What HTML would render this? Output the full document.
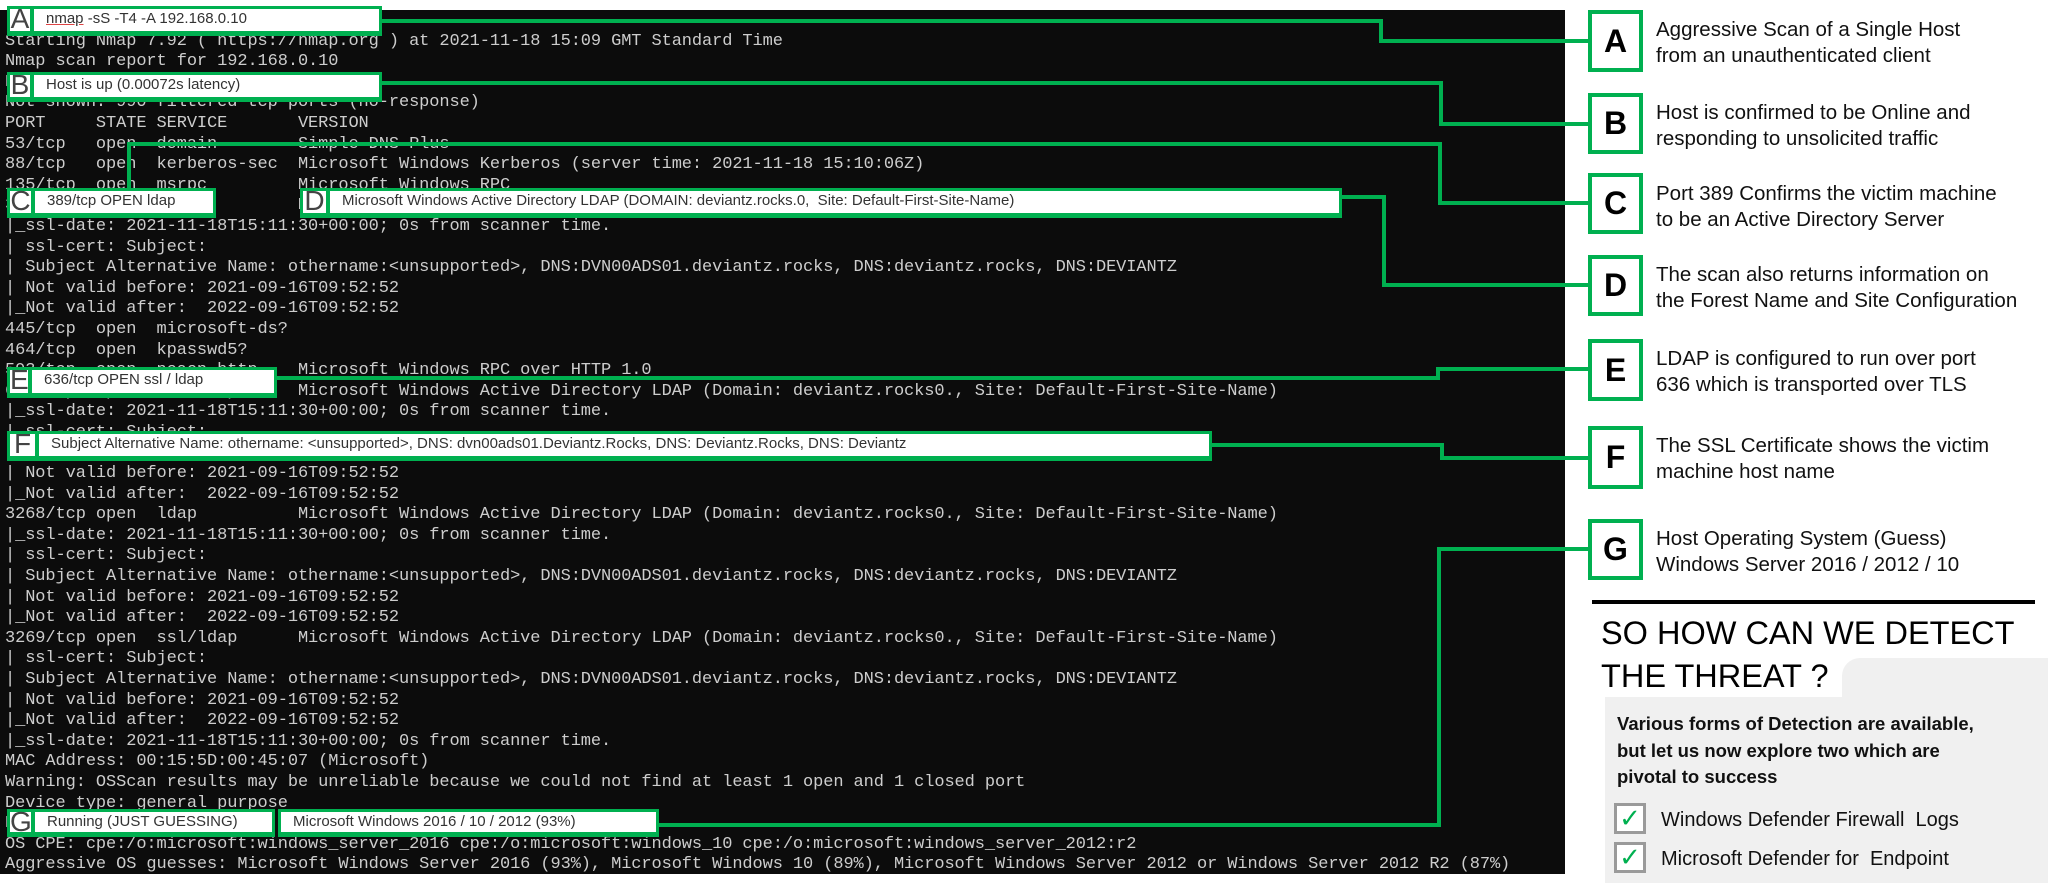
<!DOCTYPE html>
<html><head><meta charset="utf-8"><style>
*{margin:0;padding:0;box-sizing:border-box}
body{width:2048px;height:894px;background:#fff;position:relative;overflow:hidden;font-family:"Liberation Sans",sans-serif}
#term{position:absolute;left:0;top:10px;width:1565px;height:864px;background:#0c0c0c}
#txt{position:absolute;left:5px;top:11px;font-family:"Liberation Mono",monospace;font-size:17px;line-height:20.6px;color:#cdcdcd;white-space:pre;letter-spacing:-0.1px}
.g{position:absolute;background:#00b050}
.lb{position:absolute;background:#fff;border:3px solid #00b050;border-bottom-width:5px;color:#444;font-size:28px;line-height:20px;text-align:center;font-weight:300}
.tb{position:absolute;background:#fff;border:3px solid #00b050;border-bottom-width:5px;color:#333;font-size:15px;line-height:20px;padding-left:12px;white-space:nowrap}
.cb{position:absolute;left:1588px;width:55px;border:4px solid #00b050;background:#fff;font-weight:bold;font-size:32px;text-align:center;color:#000}
.ct{position:absolute;left:1656px;font-size:20.5px;line-height:26px;color:#111;white-space:nowrap}
.chk{position:absolute;left:1614px;width:32px;height:31px;border:3px solid #9a9a9a;background:#fff;color:#00b050;font-size:26px;line-height:24px;text-align:center}
</style></head><body>
<div id="term"></div>
<div id="txt">
Starting Nmap 7.92 ( https://nmap.org ) at 2021-11-18 15:09 GMT Standard Time
Nmap scan report for 192.168.0.10
Host is up (0.00072s latency).
Not shown: 990 filtered tcp ports (no-response)
PORT     STATE SERVICE       VERSION
53/tcp   open  domain        Simple DNS Plus
88/tcp   open  kerberos-sec  Microsoft Windows Kerberos (server time: 2021-11-18 15:10:06Z)
135/tcp  open  msrpc         Microsoft Windows RPC
389/tcp  open  ldap          Microsoft Windows Active Directory LDAP
|_ssl-date: 2021-11-18T15:11:30+00:00; 0s from scanner time.
| ssl-cert: Subject:
| Subject Alternative Name: othername:&lt;unsupported&gt;, DNS:DVN00ADS01.deviantz.rocks, DNS:deviantz.rocks, DNS:DEVIANTZ
| Not valid before: 2021-09-16T09:52:52
|_Not valid after:  2022-09-16T09:52:52
445/tcp  open  microsoft-ds?
464/tcp  open  kpasswd5?
593/tcp  open  ncacn_http    Microsoft Windows RPC over HTTP 1.0
636/tcp  open  ssl/ldap      Microsoft Windows Active Directory LDAP (Domain: deviantz.rocks0., Site: Default-First-Site-Name)
|_ssl-date: 2021-11-18T15:11:30+00:00; 0s from scanner time.
| ssl-cert: Subject:
| Subject Alternative Name:
| Not valid before: 2021-09-16T09:52:52
|_Not valid after:  2022-09-16T09:52:52
3268/tcp open  ldap          Microsoft Windows Active Directory LDAP (Domain: deviantz.rocks0., Site: Default-First-Site-Name)
|_ssl-date: 2021-11-18T15:11:30+00:00; 0s from scanner time.
| ssl-cert: Subject:
| Subject Alternative Name: othername:&lt;unsupported&gt;, DNS:DVN00ADS01.deviantz.rocks, DNS:deviantz.rocks, DNS:DEVIANTZ
| Not valid before: 2021-09-16T09:52:52
|_Not valid after:  2022-09-16T09:52:52
3269/tcp open  ssl/ldap      Microsoft Windows Active Directory LDAP (Domain: deviantz.rocks0., Site: Default-First-Site-Name)
| ssl-cert: Subject:
| Subject Alternative Name: othername:&lt;unsupported&gt;, DNS:DVN00ADS01.deviantz.rocks, DNS:deviantz.rocks, DNS:DEVIANTZ
| Not valid before: 2021-09-16T09:52:52
|_Not valid after:  2022-09-16T09:52:52
|_ssl-date: 2021-11-18T15:11:30+00:00; 0s from scanner time.
MAC Address: 00:15:5D:00:45:07 (Microsoft)
Warning: OSScan results may be unreliable because we could not find at least 1 open and 1 closed port
Device type: general purpose
Running (JUST GUESSING)
OS CPE: cpe:/o:microsoft:windows_server_2016 cpe:/o:microsoft:windows_10 cpe:/o:microsoft:windows_server_2012:r2
Aggressive OS guesses: Microsoft Windows Server 2016 (93%), Microsoft Windows 10 (89%), Microsoft Windows Server 2012 or Windows Server 2012 R2 (87%)</div>

<div class="g" style="left:380px;top:19px;width:1003px;height:4px"></div>
<div class="g" style="left:1379px;top:19px;width:4px;height:24px"></div>
<div class="g" style="left:1379px;top:39px;width:210px;height:4px"></div>

<div class="g" style="left:380px;top:81px;width:1063px;height:4px"></div>
<div class="g" style="left:1439px;top:81px;width:4px;height:45px"></div>
<div class="g" style="left:1439px;top:122px;width:150px;height:4px"></div>

<div class="g" style="left:127px;top:142px;width:4px;height:48px"></div>
<div class="g" style="left:127px;top:142px;width:1315px;height:4px"></div>
<div class="g" style="left:1438px;top:142px;width:4px;height:63px"></div>
<div class="g" style="left:1438px;top:201px;width:151px;height:4px"></div>

<div class="g" style="left:1340px;top:195px;width:46px;height:4px"></div>
<div class="g" style="left:1382px;top:195px;width:4px;height:92px"></div>
<div class="g" style="left:1382px;top:283px;width:207px;height:4px"></div>

<div class="g" style="left:274px;top:376px;width:1166px;height:4px"></div>
<div class="g" style="left:1436px;top:367px;width:4px;height:13px"></div>
<div class="g" style="left:1436px;top:367px;width:153px;height:4px"></div>

<div class="g" style="left:1210px;top:443px;width:234px;height:4px"></div>
<div class="g" style="left:1440px;top:443px;width:4px;height:17px"></div>
<div class="g" style="left:1440px;top:456px;width:149px;height:4px"></div>

<div class="g" style="left:656px;top:823px;width:785px;height:4px"></div>
<div class="g" style="left:1437px;top:547px;width:4px;height:280px"></div>
<div class="g" style="left:1437px;top:547px;width:152px;height:4px"></div>

<div class="lb" style="left:7px;top:6px;width:26px;height:30px">A</div>
<div class="tb" style="left:31px;top:6px;width:351px;height:30px"><u style="text-decoration-color:#d44">nmap</u> -sS -T4 -A 192.168.0.10</div>
<div class="lb" style="left:7px;top:72px;width:26px;height:30px">B</div>
<div class="tb" style="left:31px;top:72px;width:351px;height:30px">Host is up (0.00072s latency)</div>
<div class="lb" style="left:7px;top:188px;width:27px;height:30px">C</div>
<div class="tb" style="left:32px;top:188px;width:184px;height:30px">389/tcp OPEN ldap</div>
<div class="lb" style="left:300px;top:188px;width:29px;height:30px">D</div>
<div class="tb" style="left:327px;top:188px;width:1015px;height:30px">Microsoft Windows Active Directory LDAP (DOMAIN: deviantz.rocks.0,&nbsp; Site: Default-First-Site-Name)</div>
<div class="lb" style="left:7px;top:367px;width:24px;height:31px">E</div>
<div class="tb" style="left:29px;top:367px;width:248px;height:31px">636/tcp OPEN ssl / ldap</div>
<div class="lb" style="left:7px;top:431px;width:31px;height:30px">F</div>
<div class="tb" style="left:36px;top:431px;width:1176px;height:30px">Subject Alternative Name: othername: &lt;unsupported&gt;, DNS: dvn00ads01.Deviantz.Rocks, DNS: Deviantz.Rocks, DNS: Deviantz</div>
<div class="lb" style="left:7px;top:809px;width:27px;height:28px">G</div>
<div class="tb" style="left:32px;top:809px;width:243px;height:28px">Running (JUST GUESSING)</div>
<div class="tb" style="left:278px;top:809px;width:381px;height:28px">Microsoft Windows 2016 / 10 / 2012 (93%)</div>

<div class="cb" style="top:10px;height:62px;line-height:54px">A</div>
<div class="ct" style="top:17px">Aggressive Scan of a Single Host<br>from an unauthenticated client</div>
<div class="cb" style="top:93px;height:61px;line-height:53px">B</div>
<div class="ct" style="top:100px">Host is confirmed to be Online and<br>responding to unsolicited traffic</div>
<div class="cb" style="top:173px;height:61px;line-height:53px">C</div>
<div class="ct" style="top:181px">Port 389 Confirms the victim machine<br>to be an Active Directory Server</div>
<div class="cb" style="top:255px;height:61px;line-height:53px">D</div>
<div class="ct" style="top:262px">The scan also returns information on<br>the Forest Name and Site Configuration</div>
<div class="cb" style="top:339px;height:62px;line-height:54px">E</div>
<div class="ct" style="top:346px">LDAP is configured to run over port<br>636 which is transported over TLS</div>
<div class="cb" style="top:426px;height:63px;line-height:55px">F</div>
<div class="ct" style="top:433px">The SSL Certificate shows the victim<br>machine host name</div>
<div class="cb" style="top:519px;height:61px;line-height:53px">G</div>
<div class="ct" style="top:526px">Host Operating System (Guess)<br>Windows Server 2016 / 2012 / 10</div>

<div style="position:absolute;left:1592px;top:600px;width:443px;height:4px;background:#000"></div>
<div style="position:absolute;left:1842px;top:658px;width:206px;height:60px;background:#f0f0f0;border-top-left-radius:18px"></div>
<div style="position:absolute;left:1605px;top:697px;width:443px;height:186px;background:#f0f0f0"></div>
<div style="position:absolute;left:1601px;top:612px;font-size:32.5px;line-height:43px;color:#000;white-space:nowrap">SO HOW CAN WE DETECT<br>THE THREAT ?</div>
<div style="position:absolute;left:1617px;top:711px;font-size:18.5px;line-height:26.5px;font-weight:bold;color:#111;white-space:nowrap">Various forms of Detection are available,<br>but let us now explore two which are<br>pivotal to success</div>
<div class="chk" style="top:803px">✓</div>
<div class="chk" style="top:842px">✓</div>
<div style="position:absolute;left:1661px;top:807px;font-size:20px;line-height:26px;color:#111;white-space:pre">Windows Defender Firewall  Logs</div>
<div style="position:absolute;left:1661px;top:846px;font-size:20px;line-height:26px;color:#111;white-space:pre">Microsoft Defender for  Endpoint</div>
</body></html>
